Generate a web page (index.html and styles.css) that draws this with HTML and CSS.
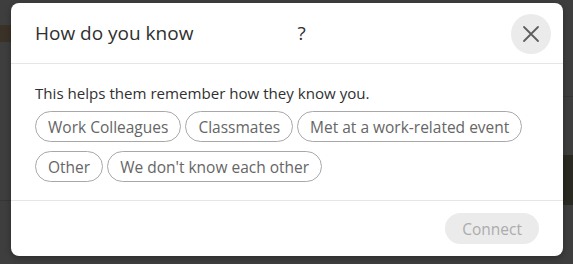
FILE: index.html
```html
<!DOCTYPE html>
<html>
<head>
<meta charset="utf-8">
<link rel="stylesheet" href="styles.css">
</head>
<body>
<div class="backdrop">
  <div class="bg-strip"></div>
  <div class="bg-line bg-left"></div>
  <div class="bg-line bg-right"></div>
  <div class="bg-photo"></div>
</div>
<div class="modal">
  <div class="modal-header">
    <h2 class="title">How do you know<span class="name-gap"></span>?</h2>
    <button class="close" aria-label="Dismiss">
      <svg width="24" height="24" viewBox="0 0 24 24"><path d="M5 5 L19 19 M19 5 L5 19" stroke="#5e5e5e" stroke-width="1.8" fill="none" stroke-linecap="round"/></svg>
    </button>
  </div>
  <div class="modal-body">
    <p class="hint">This helps them remember how they know you.</p>
    <div class="chips">
      <button class="chip">Work Colleagues</button>
      <button class="chip">Classmates</button>
      <button class="chip">Met at a work-related event</button>
      <button class="chip">Other</button>
      <button class="chip">We don't know each other</button>
    </div>
  </div>
  <div class="modal-footer">
    <button class="connect" disabled>Connect</button>
  </div>
</div>
</body>
</html>
```

FILE: styles.css
```css
html, body {
  margin: 0;
  padding: 0;
}
body {
  width: 573px;
  height: 264px;
  background: #3e3e3e;
  overflow: hidden;
  position: relative;
  font-family: "Open Sans", "Noto Sans", sans-serif;
}
.backdrop {
  position: absolute;
  inset: 0;
}
.bg-strip {
  position: absolute;
  left: 0;
  top: 25px;
  width: 12px;
  height: 17px;
  background: #3a3227;
}
.bg-line {
  position: absolute;
  height: 1px;
  background: #363636;
}
.bg-left { left: 0; top: 200px; width: 12px; }
.bg-right { left: 563px; top: 96px; width: 10px; }
.bg-photo {
  position: absolute;
  left: 563px;
  top: 155px;
  width: 10px;
  height: 50px;
  background: #2a2a22;
}
.modal {
  position: absolute;
  left: 11px;
  top: 3px;
  width: 552px;
  height: 253px;
  background: #fff;
  border-radius: 8px;
  box-shadow: 0 2px 6px rgba(0,0,0,0.3);
  display: flex;
  flex-direction: column;
}
.modal-header {
  height: 60px;
  border-bottom: 1px solid #e6e6e6;
  display: flex;
  align-items: center;
  justify-content: space-between;
  padding: 0 12px 0 24px;
}
.title {
  margin: 0;
  font-size: 19px;
  font-weight: 400;
  color: #303030;
  display: flex;
  align-items: center;
}
.name-gap {
  display: inline-block;
  width: 104px;
}
.close {
  width: 40px;
  height: 40px;
  border-radius: 50%;
  border: none;
  background: #ebebeb;
  display: flex;
  align-items: center;
  justify-content: center;
  padding: 0;
  margin-top: 1px;
}
.modal-body {
  padding: 18px 24px 0 24px;
  height: 118px;
  border-bottom: 1px solid #e6e6e6;
}
.hint {
  margin: 0 0 7px 0;
  font-size: 15.1px;
  line-height: 22px;
  color: #303030;
}
.chips {
  display: flex;
  flex-wrap: wrap;
  gap: 9px 4px;
}
.chip {
  font-family: inherit;
  font-size: 15.5px;
  color: #666;
  background: #fff;
  border: 1px solid #a8a8a8;
  border-radius: 16px;
  height: 31px;
  padding: 0 12px;
}
.modal-footer {
  flex: 1;
  display: flex;
  align-items: flex-start;
  justify-content: flex-end;
  padding: 12px 24px 0 0;
}
.connect {
  font-family: inherit;
  font-size: 15.5px;
  color: #ababab;
  background: #ebebeb;
  border: none;
  border-radius: 16px;
  height: 31px;
  padding: 0 17px;
}
```
